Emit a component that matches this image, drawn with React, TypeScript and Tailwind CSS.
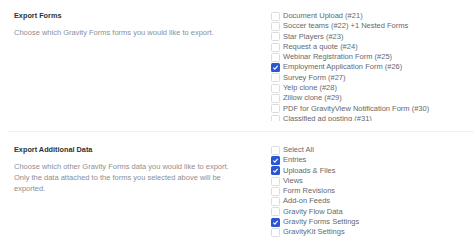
import React from "react";

const forms: [string, boolean][] = [
  ["Document Upload (#21)", false],
  ["Soccer teams (#22) +1 Nested Forms", false],
  ["Star Players (#23)", false],
  ["Request a quote (#24)", false],
  ["Webinar Registration Form (#25)", false],
  ["Employment Application Form (#26)", true],
  ["Survey Form (#27)", false],
  ["Yelp clone (#28)", false],
  ["Zillow clone (#29)", false],
  ["PDF for GravityView Notification Form (#30)", false],
  ["Classified ad posting (#31)", false],
  ["Contact Form (#32)", false],
];

const extra: [string, boolean][] = [
  ["Select All", false],
  ["Entries", true],
  ["Uploads & Files", true],
  ["Views", false],
  ["Form Revisions", false],
  ["Add-on Feeds", false],
  ["Gravity Flow Data", false],
  ["Gravity Forms Settings", true],
  ["GravityKit Settings", false],
];

function Box({ checked }: { checked: boolean }) {
  if (checked) {
    return (
      <span className="flex h-[9px] w-[9px] shrink-0 items-center justify-center rounded-[1.5px] bg-[#2c56d2]">
        <svg width="7" height="7" viewBox="0 0 8 8">
          <path d="M1.5 4.2 L3.2 5.8 L6.5 2.2" fill="none" stroke="white" strokeWidth="1.3" />
        </svg>
      </span>
    );
  }
  return <span className="h-[9px] w-[9px] shrink-0 rounded-[1.5px] border border-[#dcdcde] bg-white" />;
}

function Row({ label, checked }: { label: string; checked: boolean }) {
  return (
    <div className="flex h-[10.3px] items-center gap-[3px] whitespace-nowrap text-[7.5px] leading-[10.3px] text-[#646970]">
      <Box checked={checked} />
      <span>{label}</span>
    </div>
  );
}

export default function App() {
  return (
    <div
      className="h-[248px] w-[474px] overflow-hidden bg-white"
      style={{ fontFamily: '"Liberation Sans", Arial, sans-serif' }}
    >
      <div className="flex pl-[14px] pt-[11px]">
        <div className="w-[257px] shrink-0">
          <div className="text-[7.3px] font-bold leading-[10px] text-[#2c3338]">Export Forms</div>
          <div className="mt-[6px] text-[7.5px] leading-[11px] text-[#8c8f94]">
            Choose which Gravity Forms forms you would like to export.
          </div>
        </div>
        <div className="h-[110px] overflow-hidden">
          {forms.map(([l, c]) => (
            <Row key={l} label={l} checked={c} />
          ))}
        </div>
      </div>
      <div className="ml-[7px] mt-[10px] border-t border-[#f0f0f1]" />
      <div className="flex pl-[14px] pt-[13px]">
        <div className="w-[257px] shrink-0">
          <div className="text-[7.3px] font-bold leading-[10px] text-[#2c3338]">Export Additional Data</div>
          <div className="mt-[6px] w-[225px] text-[7.5px] leading-[11px] text-[#8c8f94]">
            Choose which other Gravity Forms data you would like to export. Only the data attached to the forms you selected above will be exported.
          </div>
        </div>
        <div>
          {extra.map(([l, c]) => (
            <Row key={l} label={l} checked={c} />
          ))}
        </div>
      </div>
    </div>
  );
}
